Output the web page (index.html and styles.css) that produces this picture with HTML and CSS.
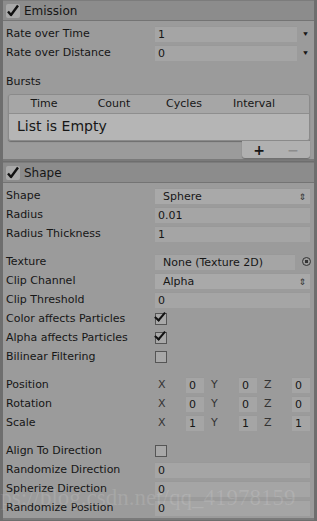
FILE: index.html
```html
<!DOCTYPE html>
<html lang="en">
  <head>
    <meta charset="UTF-8" />
    <title>Particle System Modules</title>
    <link rel="stylesheet" href="styles.css">
  </head>
  <body>
    <div class="inspector">
      <!-- Emission module -->
      <section class="module">
        <div class="module-head">
          <span class="toggle">
            <svg width="14" height="14" viewBox="0 0 14 14"><path d="M2 7.5 L5 11 L12 1.5" fill="none" stroke="#111" stroke-width="2.4" stroke-linejoin="round"/></svg>
          </span>
          Emission
        </div>
        <div class="module-body">
          <div class="row"><span class="label">Rate over Time</span><span class="field short">1</span><span class="curve-arrow">&#9662;</span></div>
          <div class="row"><span class="label">Rate over Distance</span><span class="field short">0</span><span class="curve-arrow">&#9662;</span></div>
          <div class="spacer wide"></div>
          <div class="row"><span class="label">Bursts</span></div>
          <div class="bursts">
            <div class="bursts-head">
              <span>Time</span><span>Count</span><span>Cycles</span><span>Interval</span>
            </div>
            <div class="bursts-body">List is Empty</div>
          </div>
          <div class="list-buttons">
            <span class="add">+</span><span class="remove">&minus;</span>
          </div>
        </div>
      </section>

      <!-- Shape module -->
      <section class="module">
        <div class="module-head">
          <span class="toggle">
            <svg width="14" height="14" viewBox="0 0 14 14"><path d="M2 7.5 L5 11 L12 1.5" fill="none" stroke="#111" stroke-width="2.4" stroke-linejoin="round"/></svg>
          </span>
          Shape
        </div>
        <div class="module-body">
          <div class="row"><span class="label">Shape</span><span class="field popup">Sphere<span class="updown">&#8661;</span></span></div>
          <div class="row"><span class="label">Radius</span><span class="field">0.01</span></div>
          <div class="row"><span class="label">Radius Thickness</span><span class="field">1</span></div>
          <div class="spacer"></div>
          <div class="row"><span class="label">Texture</span><span class="field object">None (Texture 2D)</span><span class="picker"></span></div>
          <div class="row"><span class="label">Clip Channel</span><span class="field popup">Alpha<span class="updown">&#8661;</span></span></div>
          <div class="row"><span class="label">Clip Threshold</span><span class="field">0</span></div>
          <div class="row"><span class="label">Color affects Particles</span><span class="checkbox checked"></span></div>
          <div class="row"><span class="label">Alpha affects Particles</span><span class="checkbox checked"></span></div>
          <div class="row"><span class="label">Bilinear Filtering</span><span class="checkbox"></span></div>
          <div class="spacer"></div>
          <div class="row"><span class="label">Position</span>
            <div class="vector">
              <div class="axis"><span>X</span><span class="field">0</span></div>
              <div class="axis"><span>Y</span><span class="field">0</span></div>
              <div class="axis"><span>Z</span><span class="field">0</span></div>
            </div>
          </div>
          <div class="row"><span class="label">Rotation</span>
            <div class="vector">
              <div class="axis"><span>X</span><span class="field">0</span></div>
              <div class="axis"><span>Y</span><span class="field">0</span></div>
              <div class="axis"><span>Z</span><span class="field">0</span></div>
            </div>
          </div>
          <div class="row"><span class="label">Scale</span>
            <div class="vector">
              <div class="axis"><span>X</span><span class="field">1</span></div>
              <div class="axis"><span>Y</span><span class="field">1</span></div>
              <div class="axis"><span>Z</span><span class="field">1</span></div>
            </div>
          </div>
          <div class="spacer"></div>
          <div class="row"><span class="label">Align To Direction</span><span class="checkbox"></span></div>
          <div class="row"><span class="label">Randomize Direction</span><span class="field">0</span></div>
          <div class="row"><span class="label">Spherize Direction</span><span class="field">0</span></div>
          <div class="row"><span class="label">Randomize Position</span><span class="field">0</span></div>
        </div>
      </section>

      <div class="watermark">https://blog.csdn.net/qq_41978159</div>
    </div>
  </body>
</html>
```

FILE: styles.css
```css
body {
  margin: 0;
  background-color: #6e6e6e;
  font-family: "DejaVu Sans", Verdana, sans-serif;
  font-size: 11px;
  color: #161616;
}
.inspector {
  position: relative;
  width: 317px;
  height: 521px;
  box-sizing: border-box;
  padding: 0 3px 0 3px;
  background-color: #6e6e6e;
  overflow: hidden;
}
.module {
  background-color: #9b9b9b;
  border-bottom: 2px solid #7a7a7a;
}
.module + .module {
  margin-top: 1px;
}
.module-head {
  display: flex;
  align-items: center;
  height: 19px;
  padding-left: 3px;
  font-size: 12px;
  background-color: #8c8c8c;
  border-top: 1px solid #7c7c7c;
  border-bottom: 1px solid #747474;
}
.toggle {
  display: inline-flex;
  width: 14px;
  height: 14px;
  margin-right: 4px;
  background-color: #a9a9a9;
  border-radius: 2px;
}
.module-body {
  padding: 3px 0 1px 0;
}
.row {
  display: flex;
  align-items: center;
  height: 19px;
}
.label {
  width: 149px;
  padding-left: 3px;
  flex-shrink: 0;
  white-space: nowrap;
}
.field {
  flex: 1;
  height: 16px;
  line-height: 16px;
  padding-left: 3px;
  margin-right: 4px;
  background-color: #a5a5a5;
  border-top: 1px solid #999;
  box-sizing: border-box;
}
.field.short {
  flex: 0 0 142px;
  margin-right: 0;
}
.curve-arrow {
  flex: 1;
  text-align: center;
  font-size: 9px;
  transform: scaleY(0.8);
}
.field.popup {
  display: flex;
  justify-content: space-between;
  padding-left: 8px;
  padding-right: 4px;
  background-color: #a9a9a9;
}
.updown {
  font-size: 9px;
  color: #333;
}
.field.object {
  flex: 0 0 140px;
  padding-left: 8px;
  margin-right: 0;
}
.picker {
  width: 7px;
  height: 7px;
  margin-left: 7px;
  border: 1px solid #333;
  border-radius: 50%;
  background: radial-gradient(circle, #333 0 1.5px, transparent 2px);
}
.checkbox {
  width: 10px;
  height: 10px;
  border: 1px solid #555;
  background-color: #a8a8a8;
  position: relative;
}
.checkbox.checked::after {
  content: "";
  position: absolute;
  left: 1px;
  top: -4px;
  width: 4px;
  height: 9px;
  border-right: 2px solid #111;
  border-bottom: 2px solid #111;
  transform: rotate(40deg);
}
.spacer {
  height: 9px;
}
.spacer.wide {
  height: 10px;
}
.bursts {
  margin: 3px 4px 0 5px;
  border: 1px solid #8a8a8a;
  border-radius: 3px;
  box-shadow: 0 1px 1px rgba(0, 0, 0, 0.3);
  overflow: hidden;
}
.bursts-head {
  display: grid;
  grid-template-columns: repeat(4, 1fr);
  padding-right: 20px;
  height: 18px;
  line-height: 18px;
  text-align: center;
  background-color: #a6a6a6;
  border-bottom: 1px solid #8e8e8e;
}
.bursts-body {
  height: 26px;
  line-height: 25px;
  padding-left: 8px;
  font-size: 14px;
  background-color: #b5b5b5;
}
.list-buttons {
  display: flex;
  justify-content: space-around;
  align-items: center;
  width: 68px;
  height: 17px;
  margin: 0 4px 0 auto;
  background-color: #b0b0b0;
  border-radius: 0 0 3px 3px;
  box-shadow: 0 1px 1px rgba(0, 0, 0, 0.3);
  font-size: 14px;
  font-weight: bold;
}
.list-buttons .remove {
  color: #8c8c8c;
}
.vector {
  flex: 1;
  display: grid;
  grid-template-columns: repeat(3, 1fr);
  gap: 4px;
  margin-right: 4px;
}
.axis {
  display: flex;
  align-items: center;
}
.axis span:first-child {
  flex: 1;
  padding-left: 3px;
  color: #333;
}
.axis .field {
  flex: 0 0 18px;
  margin-right: 0;
}
.watermark {
  position: absolute;
  left: -24px;
  top: 485px;
  font-family: "Liberation Serif", serif;
  font-size: 23px;
  color: rgba(255, 255, 255, 0.12);
  white-space: nowrap;
}
```
